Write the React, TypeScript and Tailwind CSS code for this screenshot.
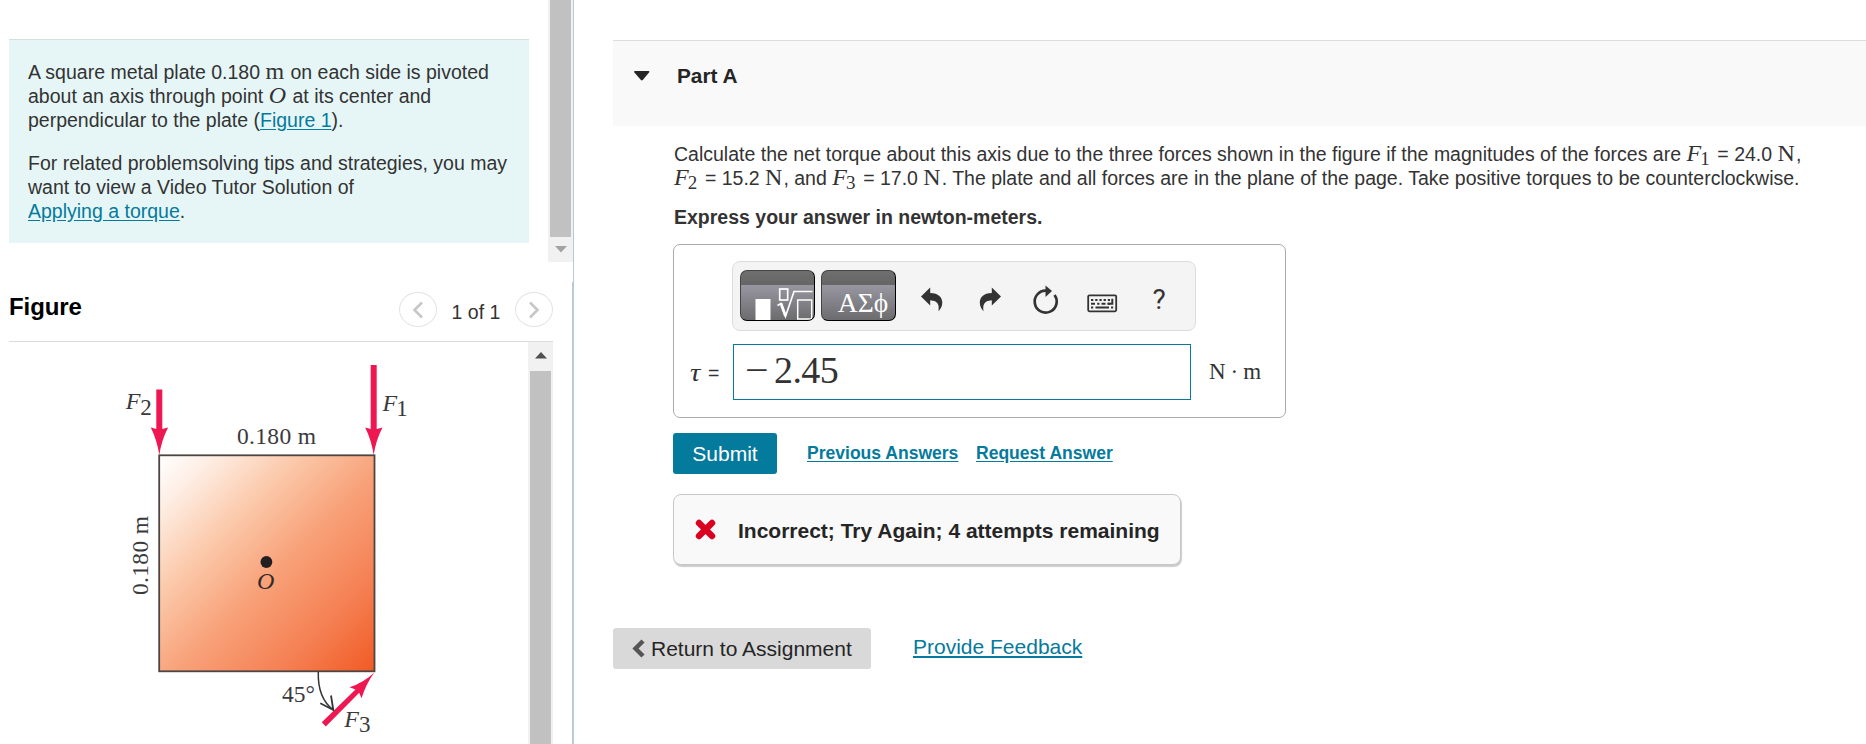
import type { ReactNode } from "react";

function MathText({ children, italic, className = "" }: { children: ReactNode; italic?: boolean; className?: string }) {
  return (
    <span className={`font-['Liberation_Serif',serif] leading-[0] ${italic ? "italic" : ""} ${className}`}>
      {children}
    </span>
  );
}

function Force({ n }: { n: number }) {
  return (
    <span className="inline-block w-[25.5px] whitespace-nowrap font-['Liberation_Serif',serif] leading-[0]">
      <span className="text-[24px] italic">F</span>
      <span className="relative top-[4px] -ml-px text-[19px]">{n}</span>
    </span>
  );
}

function Newton() {
  return (
    <span className="mr-px inline-block font-['Liberation_Serif',serif] text-[24px] leading-[0]">
      N
    </span>
  );
}

function TextLink({ children, className = "" }: { children: ReactNode; className?: string }) {
  return (
    <a href="#" className={`text-[#047a9c] underline underline-offset-2 ${className}`}>
      {children}
    </a>
  );
}

function Introduction() {
  return (
    <div className="flex h-[262px]">
      <div className="w-[548px] shrink-0 pt-[39px] pl-[9px]">
        <div className="h-[204px] w-[520px] border-t border-[#d5dfe0] bg-[#e6f6f7] pt-5 pl-[19px] text-[19.5px] leading-6 whitespace-nowrap">
          <p>
            A square metal plate 0.180 <MathText className="mr-px text-[24px]">m</MathText> on each side is pivoted
            <br />
            about an axis through point <MathText italic className="mr-px text-[24px]">O</MathText> at its center and
            <br />
            perpendicular to the plate (<TextLink>Figure 1</TextLink>).
          </p>
          <p className="mt-[19px]">
            For related problemsolving tips and strategies, you may
            <br />
            want to view a Video Tutor Solution of
            <br />
            <TextLink>Applying a torque</TextLink>.
          </p>
        </div>
      </div>
      <div className="flex w-[25px] shrink-0 flex-col items-center bg-[#f1f1f1]">
        <div className="h-[237px] w-[21px] bg-[#c1c1c1]" />
        <svg width="12" height="7" className="mt-[9px]">
          <path d="M0 0H12L6 6.5Z" fill="#a3a3a3" />
        </svg>
      </div>
    </div>
  );
}

function PagerButton({ path }: { path: string }) {
  return (
    <button className="flex h-[35px] w-[38px] items-center justify-center rounded-[50%] border border-[#e3e3e3]">
      <svg width="12" height="18" viewBox="0 0 12 18" fill="none" stroke="#c7c7c7" strokeWidth="2.6">
        <path d={path} />
      </svg>
    </button>
  );
}

function PlateDiagram() {
  return (
    <svg width="519" height="402" viewBox="9 342 519 402" className="font-['Liberation_Serif',serif]" fill="#3a3a3c">
      <defs>
        <linearGradient id="plate" x1="0" y1="0" x2="1" y2="1">
          <stop offset="0" stopColor="#ffffff" />
          <stop offset="0.12" stopColor="#feefe6" />
          <stop offset="0.33" stopColor="#fbc8a9" />
          <stop offset="0.54" stopColor="#f8a179" />
          <stop offset="0.78" stopColor="#f58053" />
          <stop offset="1" stopColor="#f15a24" />
        </linearGradient>
      </defs>
      <rect x="159.2" y="455.3" width="215.3" height="216" fill="url(#plate)" stroke="#4d4543" strokeWidth="1.8" />
      <g fill="#ef1751">
        <path d="M156.3 389.5h6V429l5.8-1.6Q161.5 440 159.3 455 157 440 150.8 427.4l5.5 1.6Z" />
        <path d="M370.7 365h6V429l5.8-1.6Q375.9 440 373.7 455 371.4 440 365.2 427.4l5.5 1.6Z" />
        <path d="M321.8 722.2L355.5 689.5 349.5 687.3Q364 682.5 374.3 672.5 366 684 361.5 698.3L359.2 692.8 325.8 726.5Z" />
      </g>
      <g fill="none" stroke="#353535" strokeWidth="1.5">
        <path d="M318.3 672Q317.5 698 333.3 710" />
        <path d="M320.3 703.3L333.3 710 331 695.5" strokeWidth="1.8" />
      </g>
      <circle cx="266.4" cy="562" r="5.9" fill="#231f20" />
      <text x="257" y="589.3" fontSize="24" fontStyle="italic" fill="#332a28">O</text>
      <text x="237" y="444.3" fontSize="23.5" textLength="79">0.180 m</text>
      <text transform="translate(148.2 595) rotate(-90)" fontSize="23.5" textLength="79">0.180 m</text>
      <text x="125.8" y="409.3" fontSize="24" fontStyle="italic">F</text>
      <text x="140.3" y="414.5" fontSize="23">2</text>
      <text x="382.5" y="411" fontSize="24" fontStyle="italic">F</text>
      <text x="396.3" y="416" fontSize="23">1</text>
      <text x="344.3" y="726.5" fontSize="24" fontStyle="italic">F</text>
      <text x="359" y="732" fontSize="23">3</text>
      <text x="282" y="702.3" fontSize="23.5">45°</text>
    </svg>
  );
}

function FigurePanel() {
  return (
    <div className="pl-[9px]">
      <div className="flex h-[80px] w-[544px] items-start border-b border-[#dcdcdc] pt-[30px]">
        <h2 className="mt-[1px] flex-1 text-[24px] leading-[28px] font-bold tracking-[-0.1px] text-black">Figure</h2>
        <PagerButton path="M10 1.5L2.5 9 10 16.5" />
        <span className="w-[78px] pt-[8px] text-center text-[19.5px] leading-6">1 of 1</span>
        <PagerButton path="M2 1.5L9.5 9 2 16.5" />
      </div>
      <div className="flex h-[402px] w-[544px]">
        <PlateDiagram />
        <div className="flex w-[25px] flex-col items-center bg-[#f1f1f1] pt-[10px]">
          <svg width="12" height="7">
            <path d="M0 6.5H12L6 0Z" fill="#505050" />
          </svg>
          <div className="mt-[12px] w-[21px] flex-1 bg-[#c1c1c1]" />
        </div>
      </div>
    </div>
  );
}

function PaletteButton({ children }: { children: ReactNode }) {
  return (
    <button className="h-[51px] w-[75px] overflow-hidden rounded-[7px] border border-t-[#444] border-r-black border-b-black border-l-[#444] bg-[linear-gradient(#6f6f6f_0,#656565_14px,#9897a1_14px,#6c6c6e_100%)]">
      {children}
    </button>
  );
}

function MathToolbar() {
  return (
    <div className="flex h-[70px] w-[464px] items-start rounded-lg border border-[#dcdcdc] bg-[#f4f4f4] pt-[8px] pl-[7px]">
      <PaletteButton>
        <svg width="73" height="49" viewBox="0 0 73 49" fill="none" stroke="#fff">
          <rect x="14.5" y="28" width="15" height="21" fill="#fff" stroke="none" />
          <rect x="38.7" y="18" width="8" height="11" strokeWidth="1.7" />
          <path d="M36.5 34.5L40 32.5 44.5 45.5 53 20.5H71.5" strokeWidth="1.7" />
          <path d="M40 32.5L44.5 45" strokeWidth="2.8" />
          <rect x="56.7" y="29" width="14" height="19" strokeWidth="1.5" />
        </svg>
      </PaletteButton>
      <div className="w-[6px]" />
      <PaletteButton>
        <span className="block pt-[14px] pl-[9px] font-['Liberation_Serif',serif] text-[27.5px] leading-[34px] text-white">ΑΣϕ</span>
      </PaletteButton>
      <svg width="300" height="52" viewBox="896 270 300 52" className="-mr-[20px] shrink-0" fill="#333">
        <path d="M921 296.5L930.2 287.5V293C938.5 293 942.3 297.5 942.3 302.5 942.3 306.5 940.5 309 938.5 311.2 939.3 305.5 938.5 300.8 930.2 300.3V305.5Z" />
        <path d="M1001 296.5L991.8 287.5V293C983.5 293 979.8 297.5 979.8 302.5 979.8 306.5 981.5 309 983.5 311.2 982.7 305.5 983.5 300.8 991.8 300.3V305.5Z" />
        <path d="M1054.5 295A11 11 0 1 1 1046 290.6" fill="none" stroke="#333" strokeWidth="2.7" />
        <path d="M1045.5 285.5L1052 291 1045.5 297Z" />
        <rect x="1088.2" y="295.3" width="28" height="16" rx="1.2" fill="none" stroke="#333" strokeWidth="1.8" />
        <path d="M1091 300H1110" stroke="#333" strokeWidth="2.2" strokeDasharray="2.3 1.9" />
        <path d="M1091 303.7H1110" stroke="#333" strokeWidth="2.1" strokeDasharray="4 2.2 2.3 2" />
        <path d="M1091 307.6H1093.2M1095.5 307.6H1109M1111 307.6H1113.2" stroke="#333" strokeWidth="2" />
        <path d="M1112.3 298.8V303.8H1107.5" fill="none" stroke="#333" strokeWidth="2" />
        <text x="1152.5" y="309" fontSize="28" className="font-[Roboto,sans-serif]">?</text>
      </svg>
    </div>
  );
}

function AnswerBox() {
  return (
    <div className="mt-[8px] h-[174px] w-[613px] rounded-[7px] border border-[#aaa] pt-[16px] pl-[58px]">
      <MathToolbar />
      <div className="-ml-[42px] mt-[13px] flex">
        <div className="flex w-[43px] pt-[17px] text-[19.5px] leading-6 whitespace-nowrap">
          <MathText italic className="w-[18px] origin-left scale-x-115 pt-3 text-[25px]">τ</MathText>
          <span>=</span>
        </div>
        <div className="flex h-[56px] w-[458px] border border-[#047a9c] pl-[11px] font-['Liberation_Serif',serif] text-[38px] leading-[51px] text-[#333]">
          <span className="w-[29px] origin-left scale-x-110">−</span>
          <span className="tracking-[-0.6px]">2.45</span>
        </div>
        <div className="pt-[16px] pl-[18px] font-['Liberation_Serif',serif] text-[23px] leading-6 [word-spacing:-0.8px]">N · m</div>
      </div>
    </div>
  );
}

function PartA() {
  return (
    <div className="w-[1253px] pt-[40px]">
      <div className="flex h-[86px] items-start border-t border-[#dcdede] bg-[#f9f9f9] pt-[23px] pl-[21px]">
        <svg width="16" height="10" className="mt-[7px]">
          <path d="M1 0H14.5Q16 0 15 1.5L9 8.8Q7.8 10 6.7 8.8L.4 1.5Q-.4 .2 1 0Z" fill="#252525" />
        </svg>
        <h3 className="ml-[27px] text-[20.8px] leading-6 font-bold text-[#252525]">Part A</h3>
      </div>
      <div className="pt-[16px] pl-[60px]">
        <p className="ml-px text-[19.5px] leading-6 whitespace-nowrap">
          Calculate the net torque about this axis due to the three forces shown in the figure if the magnitudes of the forces are <Force n={1} /> = 24.0 <Newton />,
          <br />
          <Force n={2} /> = 15.2 <Newton />, and <Force n={3} /> = 17.0 <Newton />. The plate and all forces are in the plane of the page. Take positive torques to be counterclockwise.
        </p>
        <p className="mt-[15px] ml-px pb-[7px] text-[19.5px] leading-6 font-bold">Express your answer in newton-meters.</p>
        <AnswerBox />
        <div className="mt-[15px] flex h-[41px] items-start">
          <button className="h-[41px] w-[104px] rounded-[3px] bg-[#047a9c] text-[21px] leading-[41px] text-white">Submit</button>
          <div className="flex pt-[8px] pl-[30px] text-[17.55px] leading-6 font-bold whitespace-nowrap">
            <TextLink className="w-[169px]">Previous Answers</TextLink>
            <TextLink>Request Answer</TextLink>
          </div>
        </div>
        <div className="mt-[20px] flex h-[71px] w-[508px] items-center rounded-lg border border-[#c7c7c7] bg-[#f9f9f9] pl-[21px] shadow-[1px_2px_1px_rgba(0,0,0,0.2)]">
          <svg width="21" height="21" viewBox="0 0 21 21" stroke="#db0020" strokeWidth="6.4" strokeLinecap="round">
            <path d="M4 4L17 17M17 4L4 17" />
          </svg>
          <span className="ml-[22px] pt-[3px] text-[21px] leading-6 font-bold whitespace-nowrap text-[#252525]">
            Incorrect; Try Again; 4 attempts remaining
          </span>
        </div>
      </div>
      <div className="mt-[63px] flex">
        <button className="flex h-[41px] w-[258px] items-center rounded-[3px] bg-[#d9d9d9] pl-[19px] text-[21px] text-[#252525]">
          <svg width="13" height="19" viewBox="0 0 13 19" fill="none" stroke="#555" strokeWidth="4.4">
            <path d="M11 2L3.5 9.5 11 17" />
          </svg>
          <span className="ml-[6px] whitespace-nowrap">Return to Assignment</span>
        </button>
        <a href="#" className="ml-[42px] pt-[7px] text-[21px] leading-6 text-[#047a9c] underline decoration-2 underline-offset-2">
          Provide Feedback
        </a>
      </div>
    </div>
  );
}

export default function App() {
  return (
    <div className="flex h-[744px] w-[1866px] overflow-hidden bg-white font-['Liberation_Sans',sans-serif] text-[#333]">
      <div className="w-[572px]">
        <Introduction />
        <FigurePanel />
      </div>
      <div className="flex w-[41px] flex-col">
        <div className="ml-px h-[282px] w-px bg-[#b9c7d9]" />
        <div className="w-[2px] flex-1 bg-[#b8cadb]" />
      </div>
      <PartA />
    </div>
  );
}
